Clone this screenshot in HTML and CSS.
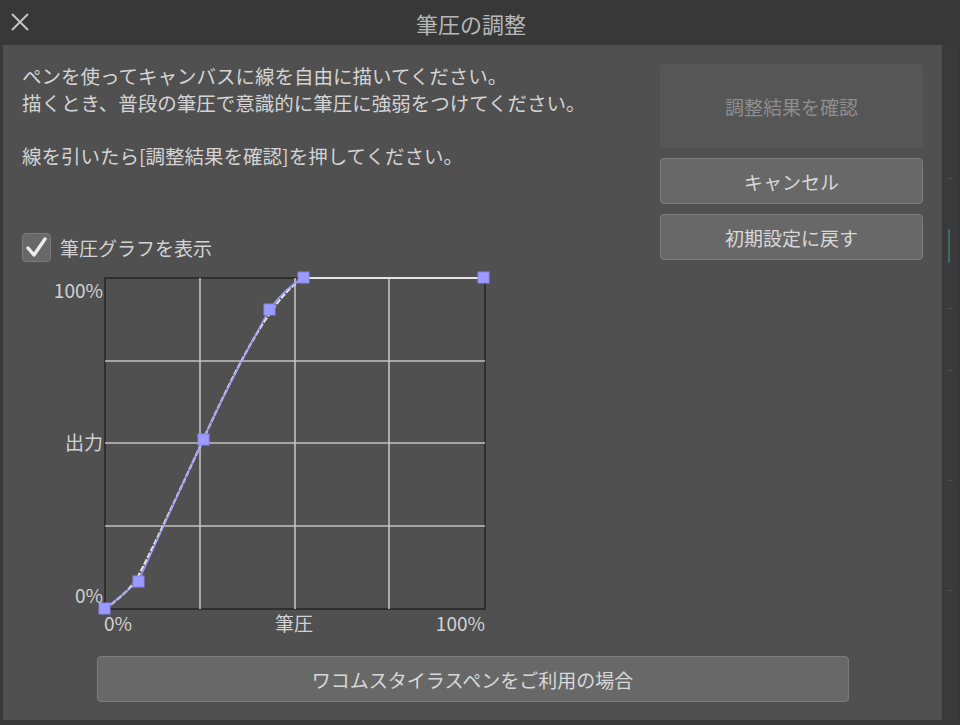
FILE: index.html
```html
<!DOCTYPE html>
<html lang="ja">
<head>
    <meta charset="UTF-8">
    <meta name="viewport" content="width=device-width, initial-scale=1.0">
    <title>筆圧の調整</title>
    <link rel="stylesheet" href="styles.css">
</head>
<body>
    <div class="titlebar">
        <svg class="close" width="20" height="20" viewBox="0 0 20 20">
            <path d="M2 2 L18 18 M18 2 L2 18" stroke="#c4c4c4" stroke-width="2" fill="none"/>
        </svg>
        <div class="title">筆圧の調整</div>
    </div>

    <div class="main">
        <div class="panel">
            <div class="top">
                <div class="left">
                    <div class="info">
                        <p>ペンを使ってキャンバスに線を自由に描いてください。</p>
                        <p>描くとき、普段の筆圧で意識的に筆圧に強弱をつけてください。</p>
                        <p>&nbsp;</p>
                        <p>線を引いたら[調整結果を確認]を押してください。</p>
                    </div>

                    <label class="check-row">
                        <span class="checkbox">
                            <svg width="29" height="29" viewBox="0 0 29 29">
                                <path d="M6 15 L12 22 L23 6" stroke="#ececec" stroke-width="3.4" fill="none" stroke-linecap="round" stroke-linejoin="round"/>
                            </svg>
                        </span>
                        筆圧グラフを表示
                    </label>

                    <!-- グラフ: viewBox をページ座標に合わせている -->
                    <svg class="graph" width="460" height="374" viewBox="40 266 460 374">
                        <rect x="105" y="278" width="380" height="331" fill="#505050" stroke="#2f2f2f" stroke-width="2"/>
                        <g stroke="#c2c2c2" stroke-width="1.6">
                            <line x1="200" y1="278" x2="200" y2="609"/>
                            <line x1="295" y1="278" x2="295" y2="609"/>
                            <line x1="389" y1="278" x2="389" y2="609"/>
                            <line x1="105" y1="361" x2="485" y2="361"/>
                            <line x1="105" y1="443" x2="485" y2="443"/>
                            <line x1="105" y1="526" x2="485" y2="526"/>
                        </g>

                        <!-- 補間カーブ -->
                        <path d="M105,609 C115,601 128,592 136,580 C146,563 180,490 203,440 C225,392 248,345 268,316 C280,298 292,285 303,278"
                              fill="none" stroke="#e4e4e4" stroke-width="2.2" stroke-dasharray="6 1.5"/>
                        <line x1="303" y1="278" x2="485" y2="278" stroke="#e4e4e4" stroke-width="2.2"/>
                        <path d="M105,609 L138,582 C160,535 185,478 203,440 C222,398 250,345 269,310 C280,295 292,284 303,278"
                              fill="none" stroke="#9d9dff" stroke-width="1.5"/>

                        <g fill="#9b9bff" stroke="#8686ee" stroke-width="1">
                            <rect x="99" y="603" width="11" height="11"/>
                            <rect x="133" y="576" width="11" height="11"/>
                            <rect x="198" y="434" width="11" height="11"/>
                            <rect x="264" y="304" width="11" height="11"/>
                            <rect x="298" y="272" width="11" height="11"/>
                            <rect x="478" y="272" width="11" height="11"/>
                        </g>

                        <g class="axis">
                            <text x="103" y="298" text-anchor="end">100%</text>
                            <text x="103" y="450" text-anchor="end">出力</text>
                            <text x="103" y="603" text-anchor="end">0%</text>
                            <text x="104" y="631">0%</text>
                            <text x="294" y="631" text-anchor="middle">筆圧</text>
                            <text x="485" y="631" text-anchor="end">100%</text>
                        </g>
                    </svg>
                </div>

                <div class="actions">
                    <button class="btn btn-disabled" disabled>調整結果を確認</button>
                    <button class="btn">キャンセル</button>
                    <button class="btn">初期設定に戻す</button>
                </div>
            </div>

            <button class="btn btn-wide">ワコムスタイラスペンをご利用の場合</button>
        </div>

        <div class="sidebar">
            <span class="tick" style="top: 133px"></span>
            <span class="marker"></span>
            <span class="tick" style="top: 263px"></span>
            <span class="tick" style="top: 325px"></span>
            <span class="tick" style="top: 435px"></span>
            <span class="tick" style="top: 545px"></span>
        </div>
    </div>
</body>
</html>
```

FILE: styles.css
```css
* {
    box-sizing: border-box;
}
body {
    margin: 0;
    width: 960px;
    height: 725px;
    overflow: hidden;
    background: #393939;
    font-family: "Noto Sans CJK JP", "Noto Sans", sans-serif;
    color: #d4d4d4;
}
.titlebar {
    position: relative;
    height: 45px;
    background: #383838;
    display: flex;
    align-items: center;
    justify-content: center;
    width: 942px;
}
.close {
    position: absolute;
    left: 10px;
    top: 12px;
}
.title {
    font-size: 22px;
    color: #b8b8b8;
}
.main {
    display: flex;
    height: 675px;
}
.panel {
    margin-left: 3px;
    width: 939px;
    background: #505050;
    padding: 18px 19px 18px;
    display: flex;
    flex-direction: column;
}
.top {
    flex: 1;
    display: flex;
    justify-content: space-between;
}
.info {
    font-size: 19.5px;
    line-height: 26.5px;
}
.info p {
    margin: 0;
    white-space: nowrap;
}
.check-row {
    display: flex;
    align-items: center;
    gap: 9px;
    margin-top: 64px;
    font-size: 19px;
    height: 29px;
}
.checkbox {
    width: 29px;
    height: 29px;
    background: #686868;
    border: 1px solid #7a7a7a;
    border-radius: 4px;
    display: flex;
    align-items: center;
    justify-content: center;
}
.checkbox svg {
    flex: none;
}
.graph {
    display: block;
    margin: 4px 0 0 18px;
}
.axis text {
    font-family: "Noto Sans CJK JP", "Noto Sans", sans-serif;
    font-size: 19px;
    fill: #d2d2d2;
}
.actions {
    width: 263px;
    margin-top: 1px;
    display: flex;
    flex-direction: column;
    gap: 10px;
}
.btn {
    font-family: inherit;
    font-size: 19px;
    color: #d8d8d8;
    background: #686868;
    border: 1px solid #7c7c7c;
    border-radius: 4px;
    height: 46px;
    padding: 0;
}
.btn-disabled {
    height: 84px;
    background: #565656;
    border-color: #565656;
    color: #8e8e8e;
}
.btn-wide {
    align-self: center;
    width: 752px;
}
.sidebar {
    position: relative;
    width: 17px;
    background: #3a3a3a;
    border-right: 1px solid #333;
}
.tick {
    position: absolute;
    left: 5px;
    width: 6px;
    height: 1px;
    background: #4e4e4e;
}
.marker {
    position: absolute;
    left: 6px;
    top: 184px;
    width: 2px;
    height: 34px;
    background: #3f6a66;
}
```
